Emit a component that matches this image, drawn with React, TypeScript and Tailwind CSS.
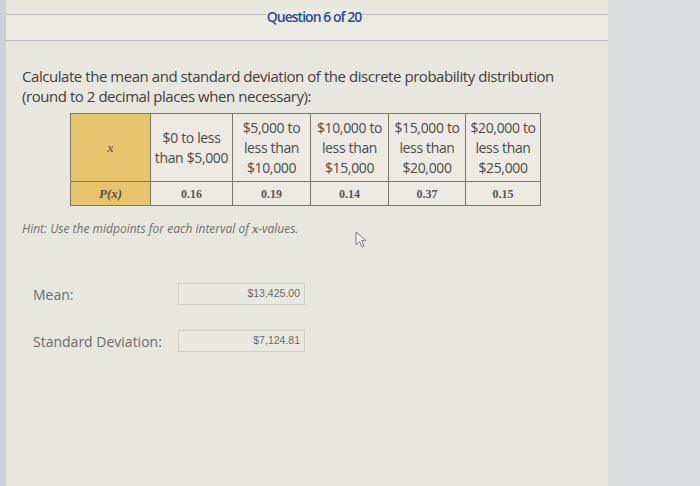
import React from "react";

const headers = [
  ["$0 to less", "than $5,000"],
  ["$5,000 to", "less than", "$10,000"],
  ["$10,000 to", "less than", "$15,000"],
  ["$15,000 to", "less than", "$20,000"],
  ["$20,000 to", "less than", "$25,000"],
];

const probs = ["0.16", "0.19", "0.14", "0.37", "0.15"];
const widths = ["w-[82px]", "w-[78px]", "w-[78px]", "w-[77px]", "w-[75px]"];

function AnswerRow({ label, value, top }: { label: string; value: string; top: string }) {
  return (
    <div className={`flex items-center ${top}`}>
      <span className="w-[156px] pl-[11px] text-[14px] text-[#6a6c6c]">{label}</span>
      <div className="w-[127px] h-[22px] border border-[#cfd0c8] bg-[#e9e8e1] flex items-center justify-end pr-[4px]">
        <span className="text-[10.5px] text-[#6a6a66] font-['Liberation_Sans',sans-serif]">{value}</span>
      </div>
    </div>
  );
}

export default function App() {
  return (
    <div className="w-[700px] h-[486px] flex bg-[#dcdedf] font-['Open_Sans',sans-serif] overflow-hidden">
      <div className="w-[6px] bg-[#cdd1d6]" />
      <div className="w-[602px] bg-[#e8e7df] flex flex-col">
        <div className="h-[14px]" />
        <div className="h-[27px] border-t border-b border-[#b6babb] bg-[#ebeae3] flex justify-center">
          <span className="h-[16px] leading-[16px] -mt-[6px] px-[1px] bg-[#ebeae3] text-[14px] font-semibold tracking-[-0.07em] text-[#2d4b93] ml-[14px]">
            Question 6 of 20
          </span>
        </div>
        <div className="pl-[16px] pt-[25px]">
          <p className="text-[15px] leading-[20px] text-[#3e4040] tracking-[-0.03em]">
            Calculate the mean and standard deviation of the discrete probability distribution
            <br />
            (round to 2 decimal places when necessary):
          </p>
          <table className="ml-[48px] mt-[7px] border-collapse bg-[#eceae3]">
            <tbody>
              <tr className="h-[68px]">
                <td className="w-[80px] bg-[#e6c46e] border border-[#7a766a] text-center font-['Liberation_Serif',serif] italic font-bold text-[#7a6a48] text-[13px]">
                  x
                </td>
                {headers.map((h, i) => (
                  <td
                    key={i}
                    className={`${widths[i]} border border-[#7a766a] text-center text-[14px] leading-[20px] text-[#4a4c4c] tracking-[-0.025em]`}
                  >
                    {h.map((l, j) => (
                      <div key={j}>{l}</div>
                    ))}
                  </td>
                ))}
              </tr>
              <tr className="h-[24px]">
                <td className="bg-[#e6c46e] border border-[#7a766a] text-center font-['Liberation_Serif',serif] italic font-bold text-[#5c5240] text-[13px]">
                  P(x)
                </td>
                {probs.map((p, i) => (
                  <td
                    key={i}
                    className="border border-[#7a766a] text-center font-['Liberation_Serif',serif] font-bold text-[12px] text-[#55575a]"
                  >
                    {p}
                  </td>
                ))}
              </tr>
            </tbody>
          </table>
          <div className="relative mt-[15px]">
            <p className="text-[12px] leading-[16px] italic text-[#6e706e]">
              Hint: Use the midpoints for each interval of <span className="font-['Liberation_Serif',serif] font-bold">x</span>-values.
            </p>
            <svg width="14" height="18" viewBox="0 0 14 18" className="absolute left-[333px] top-[10px]">
              <path d="M1 1 L1 14 L4.5 10.5 L7 16 L9 15 L6.6 9.6 L11 9.6 Z" fill="#f4f4f0" stroke="#7a7c7c" strokeWidth="1" />
            </svg>
          </div>
          <AnswerRow label="Mean:" value="$13,425.00" top="mt-[46px]" />
          <AnswerRow label="Standard Deviation:" value="$7,124.81" top="mt-[25px]" />
        </div>
      </div>
      <div className="flex-1 bg-[#dadcde]" />
    </div>
  );
}
